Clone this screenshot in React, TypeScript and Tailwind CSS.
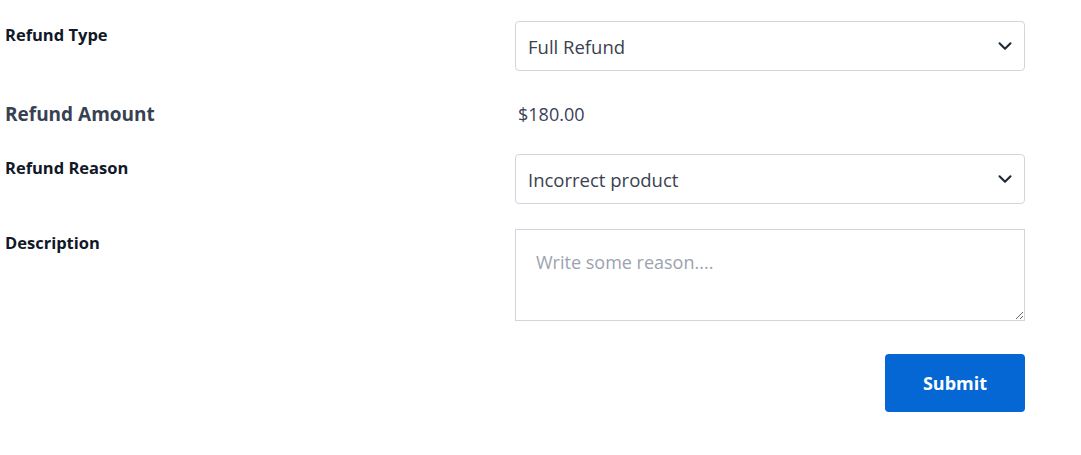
import React from 'react';
import { ChevronDown } from 'lucide-react';

const font = { fontFamily: '"Open Sans", "Noto Sans", Arial, sans-serif' };

interface SelectProps {
  value: string;
  options: string[];
}

const Select: React.FC<SelectProps> = ({ value, options }) => (
  <div className="relative w-full">
    <select
      defaultValue={value}
      className="block h-[50px] w-full appearance-none rounded-[4px] border border-[#d3d5de] bg-white pl-[12px] pr-10 pt-[2px] text-[18.5px] text-[#3a4250] outline-none"
    >
      {options.map(o => (
        <option key={o}>{o}</option>
      ))}
    </select>
    <ChevronDown
      className="pointer-events-none absolute right-[9px] top-1/2 h-[22px] w-[22px] -translate-y-1/2 text-[#1f2937]"
      strokeWidth={2.3}
    />
  </div>
);

const Label: React.FC<{ children: React.ReactNode }> = ({ children }) => (
  <div className="w-[510px] shrink-0 pt-[2px] text-[16.5px] font-bold leading-6 text-[#111827]">{children}</div>
);

export default function App() {
  return (
    <div className="min-h-[455px] w-[1081px] bg-white pl-[5px] pt-[21px]" style={font}>
      <div className="flex w-[1020px] flex-col">
        <div className="mb-[29px] flex">
          <Label>Refund Type</Label>
          <Select value="Full Refund" options={['Full Refund', 'Partial Refund']} />
        </div>

        <div className="mb-[26px] flex h-[28px] items-center">
          <div className="w-[510px] shrink-0 text-[19px] font-bold text-[#374151]">Refund Amount</div>
          <div className="pl-[3px] text-[18px] text-[#3b3f58]">$180.00</div>
        </div>

        <div className="mb-[25px] flex">
          <Label>Refund Reason</Label>
          <Select value="Incorrect product" options={['Incorrect product', 'Damaged item', 'Other']} />
        </div>

        <div className="mb-[33px] flex">
          <Label>Description</Label>
          <textarea
            placeholder="Write some reason...."
            className="block h-[92px] w-full border border-[#d3d5de] px-[20px] pb-[18px] pt-[19px] text-[18px] text-[#374151] outline-none placeholder:text-[#9ca3af]"
          />
        </div>

        <div className="flex justify-end">
          <button className="h-[58px] w-[140px] rounded-[4px] bg-[#0467d4] text-[18px] font-bold text-white">
            Submit
          </button>
        </div>
      </div>
    </div>
  );
}
